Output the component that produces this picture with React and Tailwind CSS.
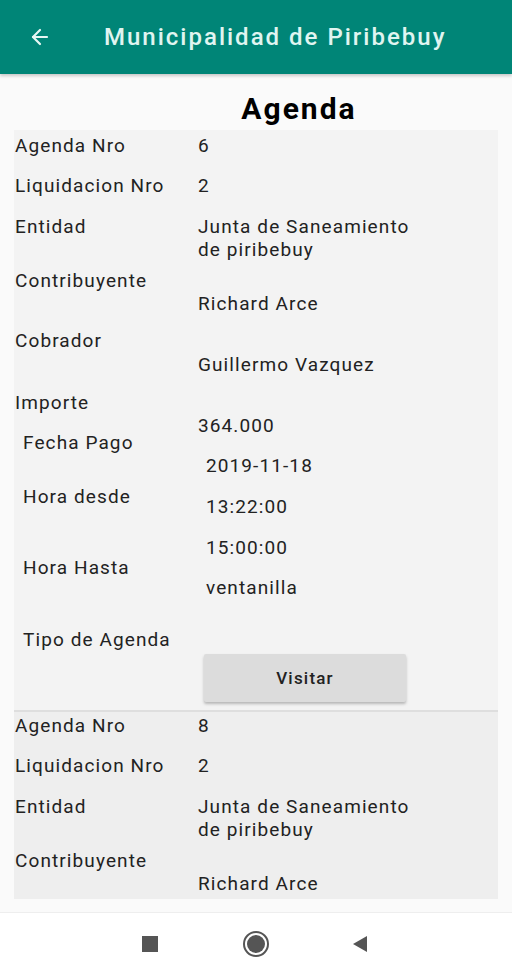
import React from 'react';
import { ArrowLeft } from 'lucide-react';

const font = { fontFamily: 'Roboto, "Noto Sans", sans-serif' };

function Card({ data, bg, children }) {
    return (
        <div className={`${bg} flex text-[19px] leading-[24px] tracking-[1.1px] text-[#222]`}>
            {/* etiquetas */}
            <div className="w-[184px] pl-px flex flex-col">
                <span>Agenda Nro</span>
                <span className="mt-4">Liquidacion Nro</span>
                <span className="mt-[17px]">Entidad</span>
                <span className="mt-[30px]">Contribuyente</span>
                {data.full && (
                    <>
                        <span className="mt-9">Cobrador</span>
                        <span className="mt-[38px]">Importe</span>
                        <span className="mt-4 pl-2">Fecha Pago</span>
                        <span className="mt-[30px] pl-2">Hora desde</span>
                        <span className="mt-[47px] pl-2">Hora Hasta</span>
                        <span className="mt-12 pl-2">Tipo de Agenda</span>
                    </>
                )}
            </div>
            {/* valores */}
            <div className="flex flex-col flex-1">
                <span>{data.nro}</span>
                <span className="mt-4">2</span>
                <span className="mt-[17px] leading-[23px]">Junta de Saneamiento<br />de piribebuy</span>
                <span className="mt-[31px]">Richard Arce</span>
                {data.full && (
                    <>
                        <span className="mt-[37px]">Guillermo Vazquez</span>
                        <span className="mt-[37px]">364.000</span>
                        <span className="mt-4 pl-2">2019-11-18</span>
                        <span className="mt-[17px] pl-2">13:22:00</span>
                        <span className="mt-[17px] pl-2">15:00:00</span>
                        <span className="mt-4 pl-2">ventanilla</span>
                        {children}
                    </>
                )}
            </div>
        </div>
    );
}

export default function App() {
    return (
        <div className="w-[512px] h-[977px] bg-[#fafafa] flex flex-col overflow-hidden" style={font}>
            {/* Toolbar */}
            <div className="h-[74px] bg-[#008577] flex items-center shrink-0 shadow-[0_2px_3px_rgba(0,0,0,0.2)]">
                <ArrowLeft className="w-6 h-6 ml-[28px] text-[#e6f7f4]" strokeWidth={2.2} />
                <span className="ml-[52px] text-[24px] font-medium text-[#e0f5f1] tracking-[2px]">Municipalidad de Piribebuy</span>
            </div>

            <h1 className="text-center pl-[86px] mt-[17px] text-[30px] leading-[35px] font-bold tracking-[2px] text-black">Agenda</h1>

            <div className="mx-[14px] mt-[4px] flex flex-col h-[770px]">
                <Card data={{ nro: 6, full: true }} bg="bg-[#f3f3f3] h-[580px] pt-1">
                    <button className="mt-[54px] ml-[6px] w-[202px] h-[48px] bg-[#dcdcdc] rounded-[2px] shadow-[0_2px_3px_rgba(0,0,0,0.25)] text-[17px] font-medium tracking-[1.2px] text-[#222]">
                        Visitar
                    </button>
                </Card>
                <div className="h-[2px] bg-[#dedede]" />
                <Card data={{ nro: 8, full: false }} bg="bg-[#eeeeee] h-[187px] pt-[2px]" />
            </div>

            <div className="flex-1" />

            {/* barra de navegación */}
            <div className="h-[65px] bg-white border-t border-[#eeeeee] flex items-center pl-[142px] pb-[2px]">
                <div className="w-[16px] h-[16px] bg-[#555]" />
                <div className="ml-[85px] w-[26px] h-[26px] rounded-full border-[2px] border-[#555] flex items-center justify-center">
                    <div className="w-[18px] h-[18px] rounded-full bg-[#555]" />
                </div>
                <svg className="ml-[82px]" width="18" height="18" viewBox="0 0 18 18">
                    <polygon points="16,1 16,17 2,9" fill="#555" />
                </svg>
            </div>
        </div>
    );
}
